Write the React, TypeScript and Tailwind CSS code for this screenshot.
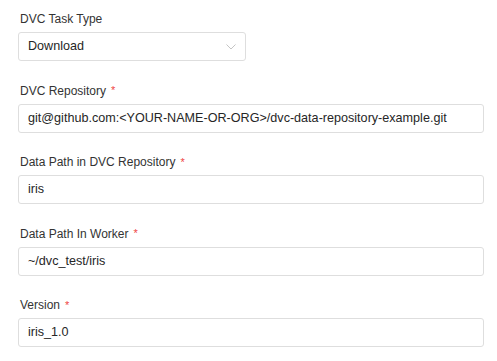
import React from 'react'

const FONT = { fontFamily: '"Liberation Sans", Arial, sans-serif' }

function Label({ text, required }: { text: string; required?: boolean }) {
  return (
    <div className="flex h-[14px] items-center text-[12px] leading-none text-[#333333]">
      <span>{text}</span>
      {required && <span className="ml-[5px] text-[11px] text-[#ef4444]">*</span>}
    </div>
  )
}

function Field({ label, value, required }: { label: string; value: string; required?: boolean }) {
  return (
    <div className="flex flex-col gap-[6px]">
      <div className="pl-[2px]">
        <Label text={label} required={required} />
      </div>
      <div className="flex h-[29px] w-[466px] items-center rounded-[3px] border border-[#dedede] bg-white px-[9px] text-[12.6px] text-[#262626]">
        {value}
      </div>
    </div>
  )
}

export default function App() {
  return (
    <div className="min-h-[361px] w-[497px] bg-white pt-[12px] pl-[18px]" style={FONT}>
      <div className="flex flex-col gap-[22.5px]">
        <div className="flex flex-col gap-[6px]">
          <div className="pl-[2px]">
            <Label text="DVC Task Type" />
          </div>
          <div className="flex h-[29px] w-[228px] items-center justify-between rounded-[3px] border border-[#dedede] bg-white pr-[8px] pl-[9px] text-[12.6px] text-[#262626]">
            <span>Download</span>
            <svg width="12" height="8" viewBox="0 0 12 8" fill="none">
              <path d="M1.5 1.5 L6 6 L10.5 1.5" stroke="#c4c4c4" strokeWidth="1" />
            </svg>
          </div>
        </div>
        <Field label="DVC Repository" required value="git@github.com:<YOUR-NAME-OR-ORG>/dvc-data-repository-example.git" />
        <Field label="Data Path in DVC Repository" required value="iris" />
        <Field label="Data Path In Worker" required value="~/dvc_test/iris" />
        <Field label="Version" required value="iris_1.0" />
      </div>
    </div>
  )
}
